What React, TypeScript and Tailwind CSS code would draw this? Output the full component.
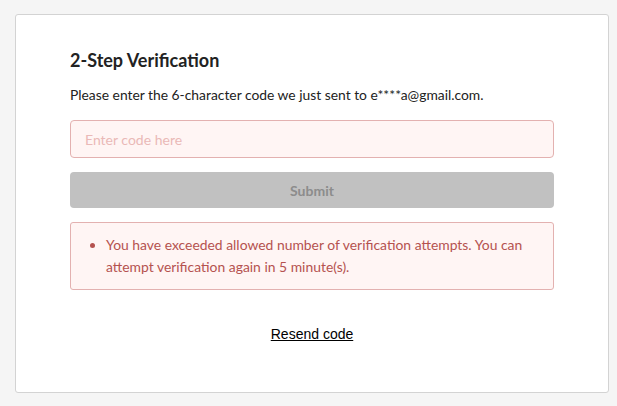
export default function App() {
  return (
    <div className="min-h-screen bg-[#f5f5f5] pt-[14px] pl-[15px]" style={{ fontFamily: 'Lato, sans-serif' }}>
      <div className="w-[594px] h-[379px] bg-white border border-[#d3d3d3] rounded-[3px] px-[54px] pt-[34px]">
        <h1 className="text-[18px] leading-[22px] font-bold text-[#222]">2-Step Verification</h1>
        <p className="mt-[14px] text-[13.85px] leading-[20px] text-[#222]">
          Please enter the 6-character code we just sent to e****a@gmail.com.
        </p>
        <input
          type="text"
          placeholder="Enter code here"
          className="mt-[15px] w-full h-[38px] px-[14px] text-[14px] bg-[#fff5f4] border border-[#e3b1b0] rounded-[4px] outline-none placeholder:text-[#eab9b7]"
        />
        <button className="mt-[14px] w-full h-[36px] rounded-[4px] bg-[#c1c1c1] text-[14px] font-bold text-[#8c8c8c]">
          Submit
        </button>
        <div className="mt-[14px] border border-[#e3b1b0] bg-[#fff5f4] rounded-[3px] pl-[20px] pr-[14px] py-[11px]">
          <ul className="list-disc pl-[15px] text-[13.9px] leading-[22px] text-[#b5524f]">
            <li>
              You have exceeded allowed number of verification attempts. You can attempt verification again in 5
              minute(s).
            </li>
          </ul>
        </div>
        <div className="mt-[31px] text-center">
          <a
            href="#"
            className="text-[14px] text-black underline"
            style={{ fontFamily: '"Liberation Sans", Arial, sans-serif' }}
          >
            Resend code
          </a>
        </div>
      </div>
    </div>
  );
}
